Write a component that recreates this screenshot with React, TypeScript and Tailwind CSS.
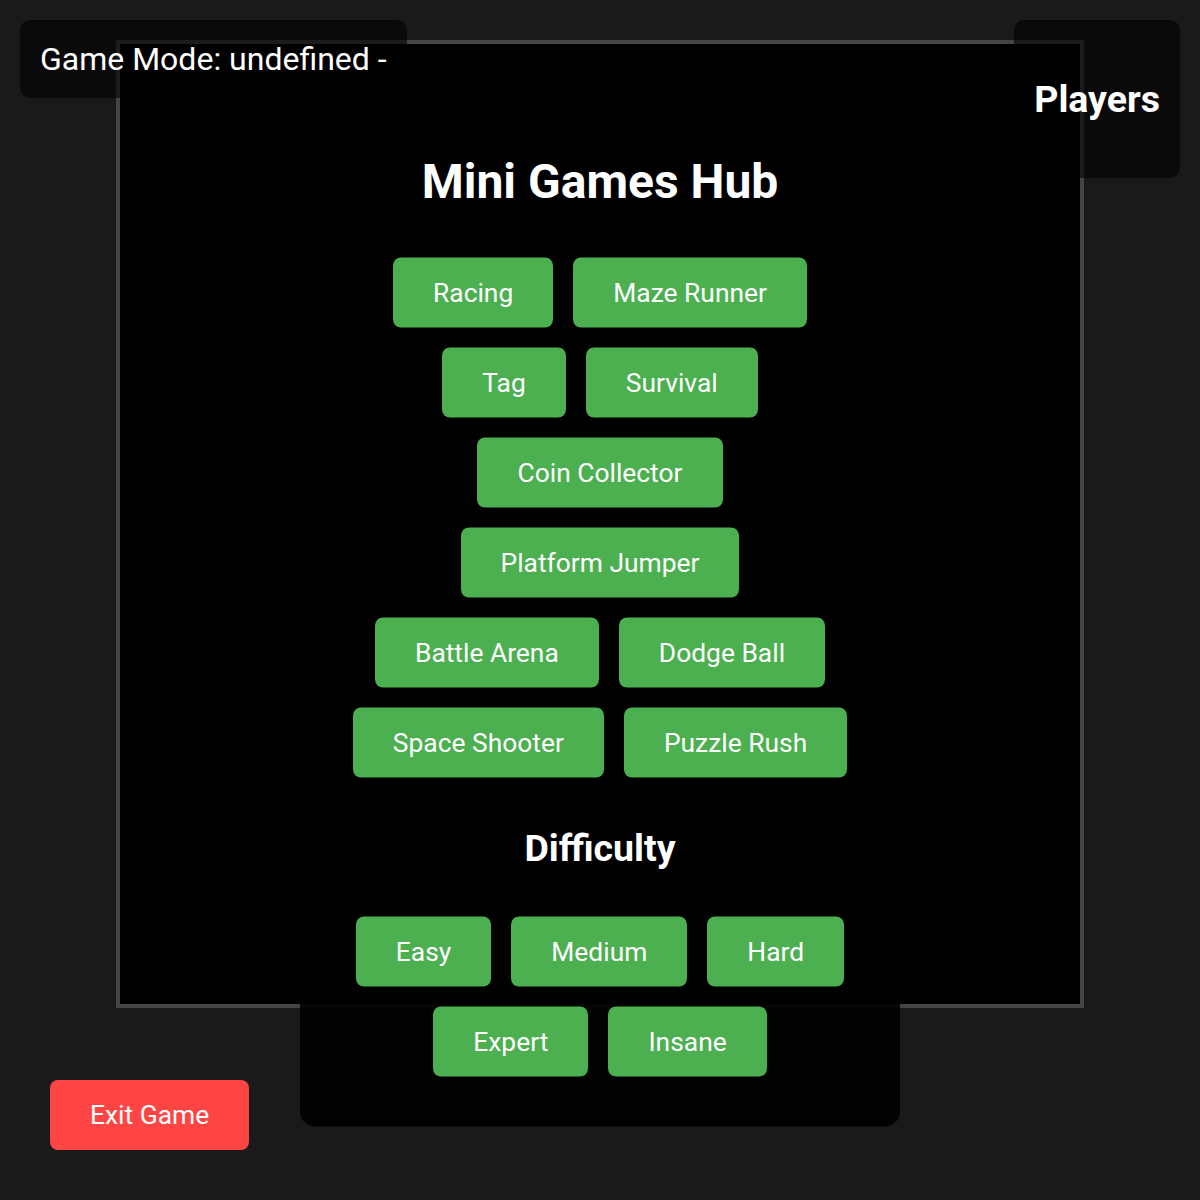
import { useState } from "react";

const GAMES = [
  "Racing",
  "Maze Runner",
  "Tag",
  "Survival",
  "Coin Collector",
  "Platform Jumper",
  "Battle Arena",
  "Dodge Ball",
  "Space Shooter",
  "Puzzle Rush",
];

const DIFFICULTIES = ["Easy", "Medium", "Hard", "Expert", "Insane"];

type Mode = { game?: string; difficulty?: string };

function MenuButton({ label, onClick }: { label: string; onClick: () => void }) {
  return (
    <button
      onClick={onClick}
      className="m-[10px] cursor-pointer rounded-[8px] bg-[#4CAF50] px-[40px] py-[19.5px] text-[26.4px] leading-[31px] text-white hover:bg-[#45a049]"
    >
      {label}
    </button>
  );
}

export default function App() {
  const [mode, setMode] = useState<Mode>({});

  return (
    <div className="relative h-[1200px] overflow-hidden bg-[#1a1a1a] font-[Roboto,sans-serif] text-white">
      {/* game canvas */}
      <div className="mx-auto mt-[40px] h-[968px] w-[968px] border-4 border-[#444] bg-black" />

      {/* HUD */}
      <div className="absolute left-[20px] top-[20px] rounded-[10px] bg-black/60 p-[20px] text-[32px] leading-[37.5px]">
        <span className="relative top-px">Game Mode: {String(mode.game)} - {mode.difficulty ?? ""}</span>
      </div>

      <div className="absolute right-[20px] top-[20px] rounded-[10px] bg-black/60 p-[20px]">
        <h2 className="my-[37px] text-[37.5px] font-bold leading-[44px]">Players</h2>
      </div>

      {/* main menu */}
      <div className="absolute left-1/2 top-1/2 w-[600px] -translate-x-1/2 -translate-y-1/2 rounded-[15px] bg-black/90 p-[40px] text-center">
        <h1 className="mb-[38px] mt-[40px] text-[48px] font-bold leading-[56px]">Mini Games Hub</h1>
        <div className="flex flex-wrap justify-center">
          {GAMES.map((g) => (
            <MenuButton key={g} label={g} onClick={() => setMode((m) => ({ ...m, game: g }))} />
          ))}
        </div>
        <h2 className="my-[37.5px] text-[37.5px] font-bold leading-[44px]">Difficulty</h2>
        <div className="flex flex-wrap justify-center">
          {DIFFICULTIES.map((d) => (
            <MenuButton key={d} label={d} onClick={() => setMode((m) => ({ ...m, difficulty: d }))} />
          ))}
        </div>
      </div>

      <button className="absolute bottom-[50px] left-[50px] cursor-pointer rounded-[8px] bg-[#ff4444] px-[40px] py-[19.5px] text-[26.4px] leading-[31px] text-white">
        Exit Game
      </button>
    </div>
  );
}
